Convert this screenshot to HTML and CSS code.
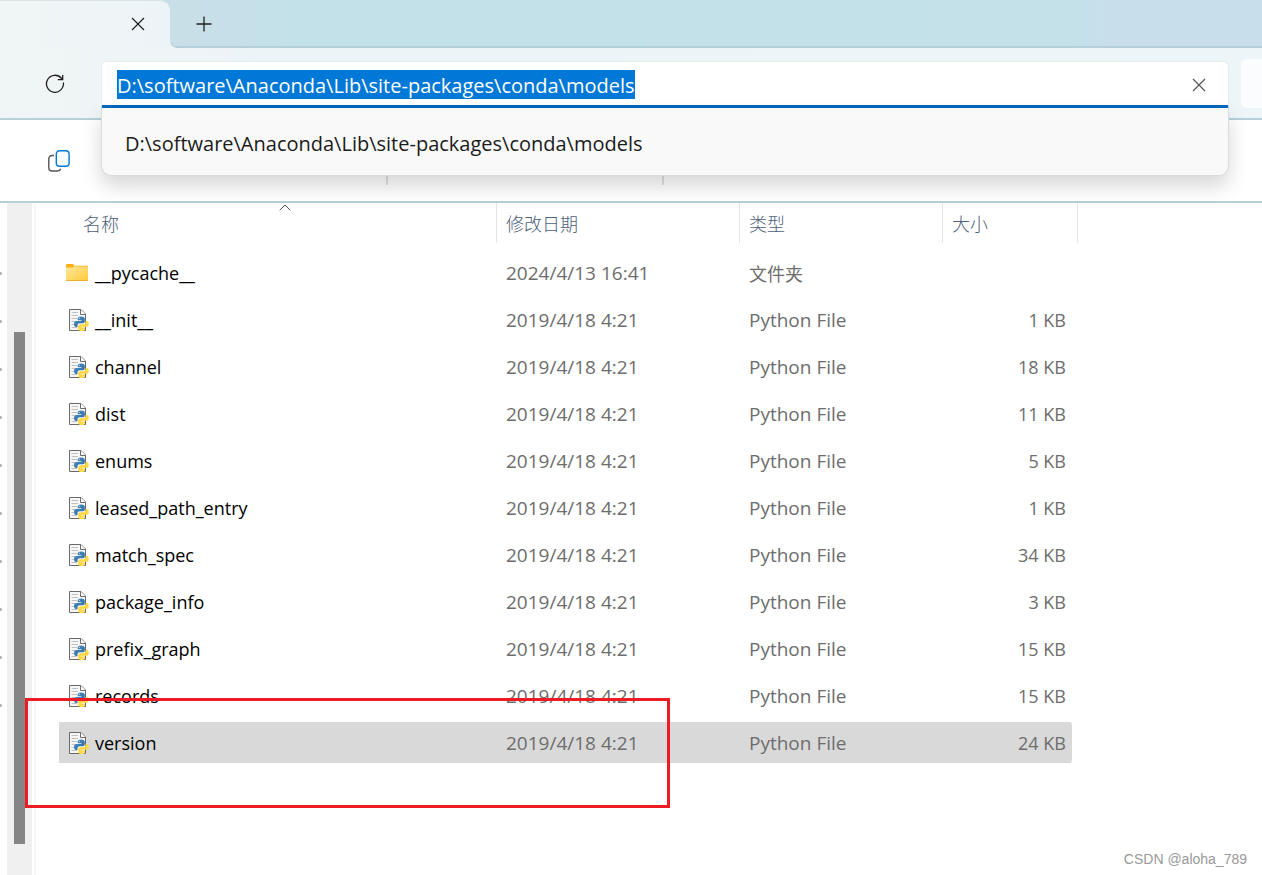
FILE: index.html
```
<!DOCTYPE html>
<html lang="zh-CN">
<head>
    <meta charset="UTF-8">
    <meta name="viewport" content="width=device-width, initial-scale=1.0">
    <title>models</title>
    <link rel="stylesheet" href="styles.css">
</head>
<body>
    <!-- Shared icons -->
    <svg class="icon-defs" aria-hidden="true">
        <defs>
            <linearGradient id="folderFill" x1="0" y1="0" x2="1" y2="1">
                <stop offset="0" stop-color="#ffe8a0"/>
                <stop offset="1" stop-color="#fdc938"/>
            </linearGradient>
            <linearGradient id="pyBlue" x1="0" y1="0" x2="1" y2="1">
                <stop offset="0" stop-color="#4b8fc4"/>
                <stop offset="1" stop-color="#2b699e"/>
            </linearGradient>
        </defs>
        <symbol id="icon-folder" viewBox="0 0 22 17">
            <path d="M0 1.2Q0 0 1.2 0H7L8.3 1.6V4H0Z" fill="#f9b010"/>
            <path d="M0 3.4H7L8.6 1.9H22V17H0Z" fill="url(#folderFill)"/>
            <path d="M8.6 2.2H22" stroke="#f2bd3f" stroke-width="1"/>
            <path d="M0 16.5H22" stroke="#eeb02c" stroke-width="1"/>
        </symbol>
        <symbol id="icon-python" viewBox="0 0 20 22">
            <path d="M.5.5H12L16.5 5V21.500H.5Z" fill="#f7f7f7" stroke="#6a6a6a"/>
            <path d="M11.500.5V5.500H16.500" fill="#fff" stroke="#6a6a6a"/>
            <path d="M2.500 3.500H9M2.500 6.500H9M2.500 9.500H8M2.500 12.500H6M2.500 15.500H5M2.500 18.500H8" stroke="#c0c0c0"/>
            <path d="M12 7.500C9.500 7.500 8.700 8.500 8.700 9.800V11.200H12.400V11.900H7.300C5.700 11.900 5 13.200 5 15S5.700 18.100 7.100 18.100H8.500V16.400C8.500 15.200 9.500 14.300 10.700 14.300H13.800C15 14.300 15.800 13.400 15.800 12.300V9.800C15.800 8.500 14.800 7.500 12 7.500Z" fill="url(#pyBlue)"/>
            <path d="M12.700 22C15.200 22 16 21.100 16 19.900V18.500H12.400V17.800H17.400C19 17.800 19.800 16.600 19.800 14.900S19.100 11.900 17.700 11.900H16.500V13.300C16.500 14.500 15.500 15.200 14.300 15.200H11.200C10 15.200 9.200 16.200 9.200 17.300V19.900C9.200 21.100 10.200 22 12.700 22Z" fill="#ffd845"/>
            <circle cx="10.500" cy="9.300" r=".5" fill="#fff"/>
            <circle cx="14.300" cy="20.300" r=".5" fill="#fff"/>
        </symbol>
        <symbol id="icon-close" viewBox="0 0 14 14">
            <path d="M1 1L13 13M13 1L1 13" fill="none" stroke="currentColor" stroke-width="1.200"/>
        </symbol>
    </svg>

    <header class="tab-strip">
        <div class="tab">
            <button class="icon-button" aria-label="关闭标签页"><svg width="14" height="14"><use href="#icon-close"/></svg></button>
        </div>
        <button class="icon-button new-tab" aria-label="新建标签页">
            <svg width="16" height="16" viewBox="0 0 16 16"><path d="M8 .5V15.500M.5 8H15.500" stroke="currentColor" stroke-width="1.300"/></svg>
        </button>
    </header>

    <div class="address-row">
        <div class="nav-buttons">
            <button class="icon-button" aria-label="刷新">
                <svg width="20" height="20" viewBox="0 0 20 20" fill="none" stroke="currentColor" stroke-width="1.300"><path d="M18.400 8.500A8.500 8.500 0 1 1 16.500 4.300L17.500 5.500M17.700 1V5.700H12.800"/></svg>
            </button>
        </div>
        <div class="address-bar">
            <input class="address-input" type="text" aria-label="地址" size="46" spellcheck="false" value="D:\software\Anaconda\Lib\site-packages\conda\models">
            <button class="icon-button clear-address" aria-label="清除"><svg width="14" height="14"><use href="#icon-close"/></svg></button>
            <div class="suggestions">
                <a class="suggestion" href="#">D:\software\Anaconda\Lib\site-packages\conda\models</a>
            </div>
        </div>
        <div class="search-box"></div>
    </div>

    <div class="toolbar">
        <button class="icon-button" aria-label="复制">
            <svg width="22" height="22" viewBox="0 0 22 22" fill="none" stroke-width="1.400">
                <path d="M6 5.500H4A3.200 3.200 0 0 0 .8 8.700V17.800A3.200 3.200 0 0 0 4 21H9.500Q12 21 12.800 18.800" stroke="#555"/>
                <rect x="8.300" y=".8" width="12.800" height="15.500" rx="3.200" stroke="#0078d4" fill="#f7fbff"/>
            </svg>
        </button>
        <span class="toolbar-divider"></span>
        <span class="toolbar-divider"></span>
    </div>

    <main class="content">
        <nav class="nav-pane">
            <div class="tree">
                <i></i><i></i><i></i><i></i><i></i><i></i><i></i><i></i><i></i><i></i>
            </div>
            <div class="scrollbar"><div class="scroll-thumb"></div></div>
        </nav>

        <div class="file-pane">
            <table class="file-table">
                <thead>
                    <tr>
                        <th class="col-name">
                            <button>名称
                                <svg class="sort-arrow" width="12" height="7" viewBox="0 0 12 7"><path d="M.7 6.300L6 1L11.300 6.300" fill="none" stroke="#555"/></svg>
                            </button>
                        </th>
                        <th class="col-date"><button>修改日期</button></th>
                        <th class="col-type"><button>类型</button></th>
                        <th class="col-size"><button>大小</button></th>
                    </tr>
                </thead>
                <tbody>
                    <tr>
                        <td><span class="file-name"><svg class="folder" width="22" height="17"><use href="#icon-folder"/></svg>__pycache__</span></td>
                        <td class="date">2024/4/13 16:41</td><td>文件夹</td><td></td>
                    </tr>
                    <tr>
                        <td><span class="file-name"><svg width="20" height="22"><use href="#icon-python"/></svg>__init__</span></td>
                        <td class="date">2019/4/18 4:21</td><td class="type">Python File</td><td>1 KB</td>
                    </tr>
                    <tr>
                        <td><span class="file-name"><svg width="20" height="22"><use href="#icon-python"/></svg>channel</span></td>
                        <td class="date">2019/4/18 4:21</td><td class="type">Python File</td><td>18 KB</td>
                    </tr>
                    <tr>
                        <td><span class="file-name"><svg width="20" height="22"><use href="#icon-python"/></svg>dist</span></td>
                        <td class="date">2019/4/18 4:21</td><td class="type">Python File</td><td>11 KB</td>
                    </tr>
                    <tr>
                        <td><span class="file-name"><svg width="20" height="22"><use href="#icon-python"/></svg>enums</span></td>
                        <td class="date">2019/4/18 4:21</td><td class="type">Python File</td><td>5 KB</td>
                    </tr>
                    <tr>
                        <td><span class="file-name"><svg width="20" height="22"><use href="#icon-python"/></svg>leased_path_entry</span></td>
                        <td class="date">2019/4/18 4:21</td><td class="type">Python File</td><td>1 KB</td>
                    </tr>
                    <tr>
                        <td><span class="file-name"><svg width="20" height="22"><use href="#icon-python"/></svg>match_spec</span></td>
                        <td class="date">2019/4/18 4:21</td><td class="type">Python File</td><td>34 KB</td>
                    </tr>
                    <tr>
                        <td><span class="file-name"><svg width="20" height="22"><use href="#icon-python"/></svg>package_info</span></td>
                        <td class="date">2019/4/18 4:21</td><td class="type">Python File</td><td>3 KB</td>
                    </tr>
                    <tr>
                        <td><span class="file-name"><svg width="20" height="22"><use href="#icon-python"/></svg>prefix_graph</span></td>
                        <td class="date">2019/4/18 4:21</td><td class="type">Python File</td><td>15 KB</td>
                    </tr>
                    <tr>
                        <td><span class="file-name"><svg width="20" height="22"><use href="#icon-python"/></svg>records</span></td>
                        <td class="date">2019/4/18 4:21</td><td class="type">Python File</td><td>15 KB</td>
                    </tr>
                    <tr class="selected">
                        <td><span class="file-name"><svg width="20" height="22"><use href="#icon-python"/></svg>version</span></td>
                        <td class="date">2019/4/18 4:21</td><td class="type">Python File</td><td>24 KB</td>
                    </tr>
                </tbody>
            </table>
        </div>

        <div class="highlight-box"></div>
        <div class="watermark">CSDN @aloha_789</div>
    </main>
</body>
</html>
```

FILE: styles.css
```
* {
    box-sizing: border-box;
}

body {
    margin: 0;
    min-height: 100vh;
    display: flex;
    flex-direction: column;
    background-color: #fff;
    color: #000;
    font-family: "Open Sans", "Noto Sans CJK SC", sans-serif;
    font-size: 18px;
}

button {
    font: inherit;
    color: inherit;
    background: none;
    border: none;
    padding: 0;
}

svg {
    display: block;
    flex: none;
}

.icon-defs {
    position: absolute;
    width: 0;
    height: 0;
}

.icon-button {
    width: 32px;
    height: 32px;
    display: flex;
    justify-content: center;
    align-items: center;
    color: #1f1f1f;
}

/* Tabs */
.tab-strip {
    height: 48px;
    display: flex;
    align-items: center;
    background: linear-gradient(90deg, #c9dfe8 14%, #c3e1e9 24%, #c4e1ea 85%, #c8dfeb 88%);
    border-bottom: 2px solid #b5d0da;
}

.tab {
    position: relative;
    width: 170px;
    height: 48px;
    margin-bottom: -2px;
    padding: 0 16px 2px 0;
    display: flex;
    align-items: center;
    justify-content: flex-end;
    background: linear-gradient(90deg, #f0f6f5, #edf4f8);
    border-top: 1px solid #dbe6e8;
    border-radius: 0 10px 0 0;
}

/* Rounded inner corner between the tab and the strip */
.tab::after {
    content: '';
    position: absolute;
    left: 100%;
    bottom: 0;
    width: 6px;
    height: 6px;
    background: radial-gradient(circle at 100% 0, transparent 4px, #b5d0da 5px, #edf4f8 6px);
}

.new-tab {
    margin: 2px 0 0 18px;
}

/* Address row */
.address-row {
    height: 72px;
    display: flex;
    align-items: flex-start;
    padding-top: 11px;
    background: linear-gradient(90deg, #f0f6f5, #edf4f8 20%, #ecf5f8);
    border-bottom: 2px solid #b5d0d8;
}

.nav-buttons {
    width: 101px;
    height: 50px;
    padding-left: 39px;
    display: flex;
    align-items: center;
}

.address-bar {
    position: relative;
    flex: 1;
    height: 47px;
    margin: 2px 12px 0 0;
    padding: 2px 13px 0 15px;
    display: flex;
    align-items: center;
    justify-content: space-between;
    background-color: #fff;
    border: 1px solid #e6ecee;
    border-bottom: 3px solid #0067c0;
    border-radius: 6px 6px 2px 2px;
}

.address-input {
    field-sizing: content;
    height: 29px;
    padding: 2px 0 0;
    border: none;
    outline: none;
    background-color: #0078d7;
    color: #fff;
    font: inherit;
    font-size: 20px;
}

.clear-address {
    color: #555;
}

.suggestions {
    position: absolute;
    z-index: 10;
    top: 100%;
    left: -1px;
    right: -1px;
    margin-top: 3px;
    padding: 18px 23px 13px;
    background-color: #f9f9f9;
    border: 1px solid #d9dcdd;
    border-top: none;
    border-radius: 0 0 10px 10px;
    box-shadow: 0 10px 20px rgba(0, 0, 0, 0.16);
}

.suggestion {
    display: block;
    color: #1b1b1b;
    font-size: 20px;
    line-height: 36px;
    text-decoration: none;
}

.search-box {
    width: 21px;
    height: 49px;
    background-color: #fafcfe;
    border-radius: 6px 0 0 6px;
}

/* Toolbar */
.toolbar {
    height: 83px;
    display: flex;
    align-items: center;
    padding-left: 43px;
    border-bottom: 2px solid #b5d0d8;
}

.toolbar-divider {
    width: 2px;
    height: 48px;
    margin-left: 274px;
    background-color: #e2e2e2;
}

.toolbar-divider:first-of-type {
    margin-left: 311px;
}

/* Navigation pane and its scrollbar */
.content {
    position: relative;
    flex: 1;
    display: flex;
}

.nav-pane {
    width: 36px;
    display: flex;
    border-right: 2px solid #f7f7f7;
}

.tree {
    width: 7px;
    padding-top: 69px;
    display: flex;
    flex-direction: column;
    gap: 45px;
}

.tree i {
    width: 2px;
    height: 3px;
    background-color: #a9b1b9;
    border-radius: 0 2px 2px 0;
}

.scrollbar {
    width: 25px;
    padding: 129px 7px 31px;
    background-color: #f0f0f0;
}

.scroll-thumb {
    height: 100%;
    background-color: #858585;
}

/* File list */
.file-pane {
    flex: 1;
    padding-left: 23px;
}

.file-table {
    table-layout: fixed;
    width: 1019px;
    border-collapse: separate;
    border-spacing: 0;
}

.col-name { width: 438px; }
.col-date { width: 243px; }
.col-type { width: 203px; }
.col-size { width: 135px; }

th {
    padding: 0 0 6px;
    font-weight: 300;
    color: #4c607a;
}

th button {
    position: relative;
    width: 100%;
    height: 40px;
    padding-left: 9px;
    display: flex;
    align-items: center;
    border-right: 1px solid #e5e5e5;
}

.col-name {
    padding-left: 15px;
}

.sort-arrow {
    position: absolute;
    top: 1px;
    left: 50%;
    margin-left: -6px;
}

/* The transparent borders keep the selected row clear of its neighbours */
td {
    height: 47px;
    padding: 0 9px;
    border: solid transparent;
    border-width: 3px 0;
    background-clip: padding-box;
    color: #6d6d6d;
    white-space: nowrap;
}

td:first-child {
    padding-left: 10px;
    color: #000;
    border-radius: 2px 0 0 2px;
}

td:last-child {
    padding-right: 6px;
    border-right-width: 6px;
    border-radius: 0 8px 8px 0;
    text-align: right;
}

.date,
.type {
    font-size: 19px;
}

.selected td {
    background-color: #d9d9d9;
}

.file-name {
    display: flex;
    align-items: center;
    gap: 6px;
}

.file-name .folder {
    margin: 0 1px 0 -3px;
}

.highlight-box {
    position: absolute;
    top: 495px;
    left: 25px;
    width: 645px;
    height: 110px;
    border: 3px solid #ed1c24;
}

.watermark {
    position: absolute;
    right: 15px;
    bottom: 8px;
    color: #999;
    font-family: "Liberation Sans", Arial, sans-serif;
    font-size: 14px;
}
```
